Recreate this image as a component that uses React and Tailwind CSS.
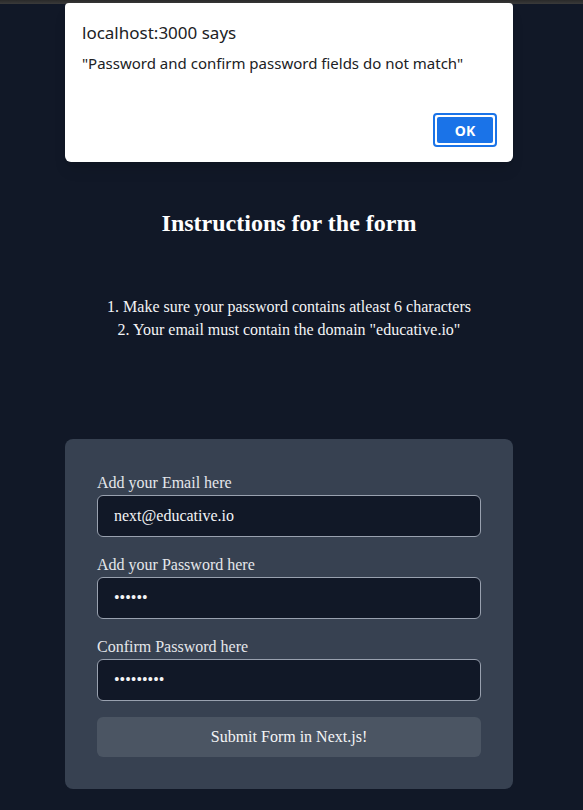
import React from 'react';

export default function App() {
  const serif = { fontFamily: '"Liberation Serif", "Times New Roman", serif' };
  return (
    <div className="relative min-h-screen w-full bg-[#111827] text-white" style={serif}>
      <div className="h-[4px] w-full bg-gradient-to-b from-[#2a2a2a] to-[#3a3a3a]" />

      {/* alert dialog */}
      <div
        className="absolute left-[65px] top-[3px] w-[448px] h-[159px] bg-white rounded-b-md rounded-t-sm shadow-lg pl-[17px] pr-[16px] pt-[19px] text-[#202124]"
        style={{ fontFamily: '"Noto Sans", "Open Sans", sans-serif' }}
      >
        <div className="text-[17px] leading-[22px]">localhost:3000 says</div>
        <div className="mt-[9px] text-[15px] leading-[20px]">"Password and confirm password fields do not match"</div>
        <div className="flex justify-end mt-[40px]">
          <button className="w-[64px] h-[34px] rounded-[4px] border-2 border-[#1a73e8] p-[2px] bg-white">
            <span className="flex h-full w-full items-center justify-center rounded-[2px] bg-[#1a73e8] text-white text-[14px] font-bold">OK</span>
          </button>
        </div>
      </div>

      <div className="flex flex-col items-center pt-[204px] pr-[5px]">
        <h1 className="text-[24px] leading-[30px] font-bold">Instructions for the form</h1>
        <ol className="mt-[57px] text-center text-[16px] leading-[23px] text-gray-100">
          <li>1. Make sure your password contains atleast 6 characters</li>
          <li>2. Your email must contain the domain "educative.io"</li>
        </ol>

        <form className="mt-[98px] w-[448px] rounded-lg bg-[#374151] p-8" onSubmit={e => e.preventDefault()}>
          <label className="block text-[16px] leading-6 text-gray-200">Add your Email here</label>
          <input
            className="block w-full h-[42px] rounded-md border border-gray-400 bg-[#111827] px-4 text-[16px] text-gray-100 outline-none"
            style={serif}
            defaultValue="next@educative.io"
          />
          <label className="mt-4 block text-[16px] leading-6 text-gray-200">Add your Password here</label>
          <input
            type="password"
            className="block w-full h-[42px] rounded-md border border-gray-400 bg-[#111827] px-4 text-[16px] text-gray-100 outline-none"
            defaultValue="123456"
          />
          <label className="mt-4 block text-[16px] leading-6 text-gray-200">Confirm Password here</label>
          <input
            type="password"
            className="block w-full h-[42px] rounded-md border border-gray-400 bg-[#111827] px-4 text-[16px] text-gray-100 outline-none"
            defaultValue="123456789"
          />
          <button
            type="submit"
            className="mt-4 block w-full h-[40px] rounded-md bg-[#4b5563] text-[16px] text-gray-100"
            style={serif}
          >
            Submit Form in Next.js!
          </button>
        </form>
      </div>
    </div>
  );
}
